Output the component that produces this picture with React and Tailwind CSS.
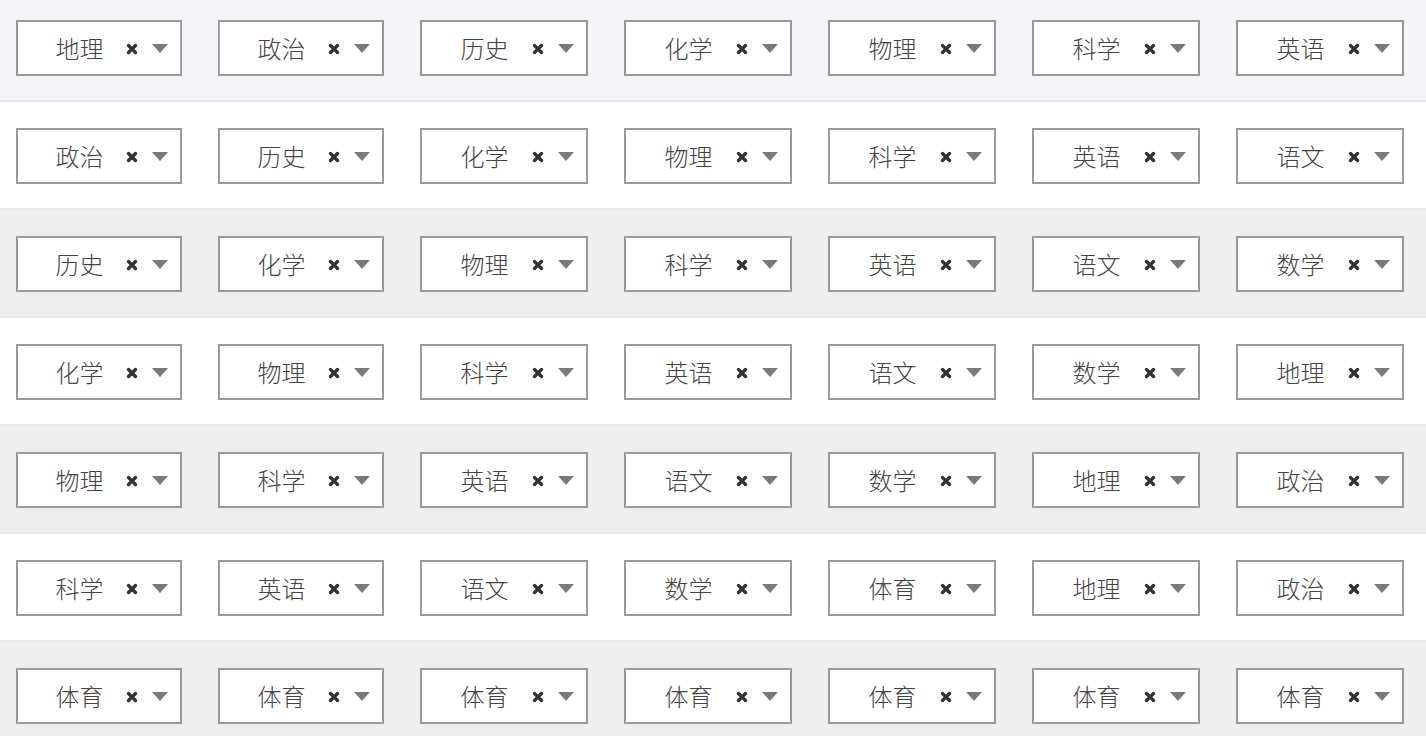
import React from 'react';

const rows = [
  ['地理', '政治', '历史', '化学', '物理', '科学', '英语'],
  ['政治', '历史', '化学', '物理', '科学', '英语', '语文'],
  ['历史', '化学', '物理', '科学', '英语', '语文', '数学'],
  ['化学', '物理', '科学', '英语', '语文', '数学', '地理'],
  ['物理', '科学', '英语', '语文', '数学', '地理', '政治'],
  ['科学', '英语', '语文', '数学', '体育', '地理', '政治'],
  ['体育', '体育', '体育', '体育', '体育', '体育', '体育'],
];

// first row is the active one, then alternating white / grey stripes
const rowBg = (i) => {
  if (i === 0) return 'bg-[#f3f3f8] pt-5';
  return i % 2 === 0 ? 'bg-[#eeeeee] pt-[26px]' : 'bg-white pt-[26px]';
};

const ClearIcon = () => (
  <svg width="12" height="12" viewBox="0 0 12 12" className="ml-[7px] mt-[1px] shrink-0">
    <path d="M2.5 2.5 L9.5 9.5 M9.5 2.5 L2.5 9.5" stroke="#333" strokeWidth="3.4" strokeLinecap="round" />
  </svg>
);

const Caret = () => (
  <svg width="16" height="9" viewBox="0 0 16 9" className="ml-[14px] mr-3 shrink-0">
    <path d="M0 0 H16 L8 9 Z" fill="#7a7a7a" />
  </svg>
);

const SubjectSelect = ({ value }) => (
  <div className="ml-4 mr-5 h-14 flex items-center border-2 border-[#9a9a9a] bg-white">
    <span
      className="flex-1 pl-[22px] text-center text-[24px] font-light text-[#444] leading-none"
      style={{ fontFamily: '"Noto Sans CJK SC", "Noto Sans", sans-serif' }}
    >
      {value}
    </span>
    <ClearIcon />
    <Caret />
  </div>
);

export default function App() {
  return (
    <div className="w-[1426px] h-[736px] overflow-hidden bg-white">
      {rows.map((row, i) => (
        <div
          key={i}
          className={`grid grid-cols-[202px_202px_204px_204px_204px_204px_204px] pb-6 border-b-2 border-[#e6e6ee] ${rowBg(i)}`}
        >
          {row.map((subject, j) => (
            <SubjectSelect key={j} value={subject} />
          ))}
        </div>
      ))}
    </div>
  );
}
